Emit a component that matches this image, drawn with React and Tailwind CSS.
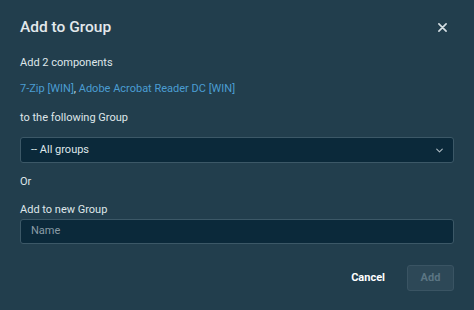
import React from 'react';

const App = () => {
  return (
    <div
      className="w-[474px] h-[310px] bg-[#223e4d] text-[#dfe6ea] overflow-hidden"
      style={{ fontFamily: 'Roboto, "Liberation Sans", sans-serif' }}
    >
      <div className="flex items-center justify-between pl-5 pr-[27px] pt-[15px] h-[40px]">
        <h2 className="text-[15.5px] font-medium text-[#e3e9ec] leading-none">Add to Group</h2>
        <button type="button" aria-label="Close" className="text-[#d6dfe4]">
          <svg viewBox="0 0 10 10" className="w-[9px] h-[9px]" aria-hidden="true">
            <path d="M1 1l8 8M9 1L1 9" stroke="currentColor" strokeWidth="1.8" strokeLinecap="round" />
          </svg>
        </button>
      </div>

      <div className="px-5 pt-[15px] text-[11px]">
        <p className="leading-[16px]">Add 2 components</p>
        <p className="mt-[10px] leading-[16px]">
          <span className="text-[#4b9dd2]">7-Zip [WIN]</span>
          <span>, </span>
          <span className="text-[#4b9dd2]">Adobe Acrobat Reader DC [WIN]</span>
        </p>
        <p className="mt-[13px] leading-[16px]">to the following Group</p>

        <div className="mt-[11px] h-[26px] flex items-center justify-between rounded-[3px] border border-[#3c5867] bg-[#0b293a] pl-[10px] pr-[10px]">
          <span className="text-[#dfe6ea]">-- All groups</span>
          <svg viewBox="0 0 10 6" className="w-[7px] h-[5px] text-[#aab8c0]" aria-hidden="true">
            <path d="M1 1l4 4 4-4" stroke="currentColor" strokeWidth="1.6" fill="none" strokeLinecap="round" strokeLinejoin="round" />
          </svg>
        </div>

        <p className="mt-[11px] leading-[16px]">Or</p>
        <p className="mt-[12px] leading-[16px]">Add to new Group</p>

        <div className="mt-[1px] h-[25px] flex items-center rounded-[3px] border border-[#3c5867] bg-[#0b293a] pl-[10px]">
          <span className="text-[#8a9ca6]">Name</span>
        </div>

        <div className="mt-[21px] flex items-center justify-end gap-[22px]">
          <button type="button" className="font-bold text-[#ffffff] text-[11px]">Cancel</button>
          <button
            type="button"
            disabled
            className="w-[47px] h-[26px] rounded-[3px] bg-[#2d4857] border border-[#3a5463] text-[#5b7583] font-bold text-[11px]"
          >
            Add
          </button>
        </div>
      </div>
    </div>
  );
};

export default App;
